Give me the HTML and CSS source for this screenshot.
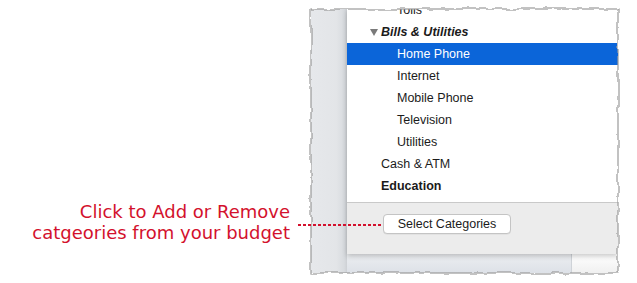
FILE: index.html
```html
<!DOCTYPE html>
<html>
<head>
<meta charset="utf-8">
<link rel="stylesheet" href="styles.css">
</head>
<body>
<div class="scene">
  <div class="note">
    <p class="note-text">Click to Add or Remove<br>catgeories from your budget</p>
  </div>
  <div class="shot-wrap">
    <div class="shot">
      <div class="strip"></div>
      <div class="main">
        <div class="panel">
          <div class="list-box">
            <ul class="list">
              <li class="row child">Tolls</li>
              <li class="row group"><span class="tri"></span>Bills &amp; Utilities</li>
              <li class="row child selected">Home Phone</li>
              <li class="row child">Internet</li>
              <li class="row child">Mobile Phone</li>
              <li class="row child">Television</li>
              <li class="row child">Utilities</li>
              <li class="row top">Cash &amp; ATM</li>
              <li class="row top bold">Education</li>
            </ul>
          </div>
          <div class="footer">
            <button class="btn">Select Categories</button>
          </div>
        </div>
        <div class="below">
          <div class="below-left"></div>
          <div class="below-right"></div>
        </div>
      </div>
    </div>
    <svg class="torn" width="321" height="278" viewBox="0 0 321 278">
      <defs>
        <filter id="rough" filterUnits="userSpaceOnUse" x="0" y="0" width="321" height="278">
          <feTurbulence type="fractalNoise" baseFrequency="0.09" numOctaves="2" seed="3" result="n"/>
          <feDisplacementMap in="SourceGraphic" in2="n" scale="5" xChannelSelector="R" yChannelSelector="G"/>
        </filter>
      </defs>
      <g filter="url(#rough)">
        <path d="M0 0H321V278H0Z M7 7V271H314V7Z" fill="#ffffff" fill-rule="evenodd"/>
        <rect x="7" y="7" width="307" height="264" fill="none" stroke="#9a9a9a" stroke-width="1.2"/>
      </g>
    </svg>
    <div class="pointer"></div>
  </div>
</div>
</body>
</html>
```
FILE: styles.css
```css
* { box-sizing: border-box; }
html, body { margin: 0; padding: 0; background: #ffffff; }
body { width: 637px; height: 283px; overflow: hidden; }

.scene {
  display: flex;
  height: 283px;
}

.note {
  width: 311px;
  padding-top: 201px;
  padding-right: 21px;
}
.note-text {
  margin: 0;
  text-align: right;
  font-family: "DejaVu Sans", sans-serif;
  font-size: 18px;
  line-height: 21px;
  color: #d3112d;
  white-space: nowrap;
}

.shot-wrap {
  position: relative;
  margin-top: 9px;
  width: 307px;
  height: 264px;
}

.shot {
  display: grid;
  grid-template-columns: 36px 1fr;
  width: 307px;
  height: 264px;
  overflow: hidden;
  background: #e5e7ea;
}

.strip {
  background: linear-gradient(to right, #e6e8eb 0%, #e3e5e8 70%, #d8dbdf 92%, #cdd0d4 100%);
}

.main {
  display: flex;
  flex-direction: column;
}

.panel {
  height: 245px;
  background: #ffffff;
  display: flex;
  flex-direction: column;
  box-shadow: 0 2px 5px rgba(0, 0, 0, 0.22);
  position: relative;
  z-index: 1;
}

.list-box {
  height: 193px;
  overflow: hidden;
}

.list {
  list-style: none;
  margin: -10px 0 0 0;
  padding: 0;
  font-family: "Liberation Sans", Arial, sans-serif;
  font-size: 12.5px;
  color: #1b1b1b;
}

.row {
  height: 22px;
  line-height: 22px;
  white-space: nowrap;
  display: flex;
  align-items: center;
}
.child { padding-left: 50px; }
.top { padding-left: 34px; }
.group {
  padding-left: 23px;
  font-weight: bold;
  font-style: italic;
}
.bold { font-weight: bold; }
.selected {
  background: #0b65d9;
  color: #ffffff;
}

.tri {
  width: 0;
  height: 0;
  border-left: 4px solid transparent;
  border-right: 4px solid transparent;
  border-top: 7px solid #7a7a7a;
  margin-right: 3px;
  margin-top: 1px;
}

.footer {
  flex: 1;
  background: #ececec;
  border-top: 1px solid #c9c9c9;
  padding: 11px 0 0 36px;
}

.btn {
  display: block;
  width: 128px;
  height: 20px;
  padding: 0;
  background: #ffffff;
  border: 1px solid #c4c4c4;
  border-radius: 4px;
  font-family: "Liberation Sans", Arial, sans-serif;
  font-size: 12.5px;
  color: #1b1b1b;
  line-height: 18px;
  box-shadow: 0 0.5px 0.5px rgba(0,0,0,0.08);
}

.below {
  flex: 1;
  display: grid;
  grid-template-columns: 225px 1fr;
}
.below-left {
  background: linear-gradient(to bottom, #eceef1 0%, #dde1e7 100%);
  border-right: 1px solid #cfd3d8;
}
.below-right {
  background: linear-gradient(to bottom, #ffffff 0%, #f0f0f0 100%);
}

.torn {
  position: absolute;
  left: -7px;
  top: -7px;
  pointer-events: none;
  z-index: 2;
}

.pointer {
  position: absolute;
  left: -13px;
  top: 215px;
  width: 84px;
  height: 2px;
  background: repeating-linear-gradient(to right, #d3112d 0 3px, transparent 3px 5px);
  z-index: 3;
}
```
